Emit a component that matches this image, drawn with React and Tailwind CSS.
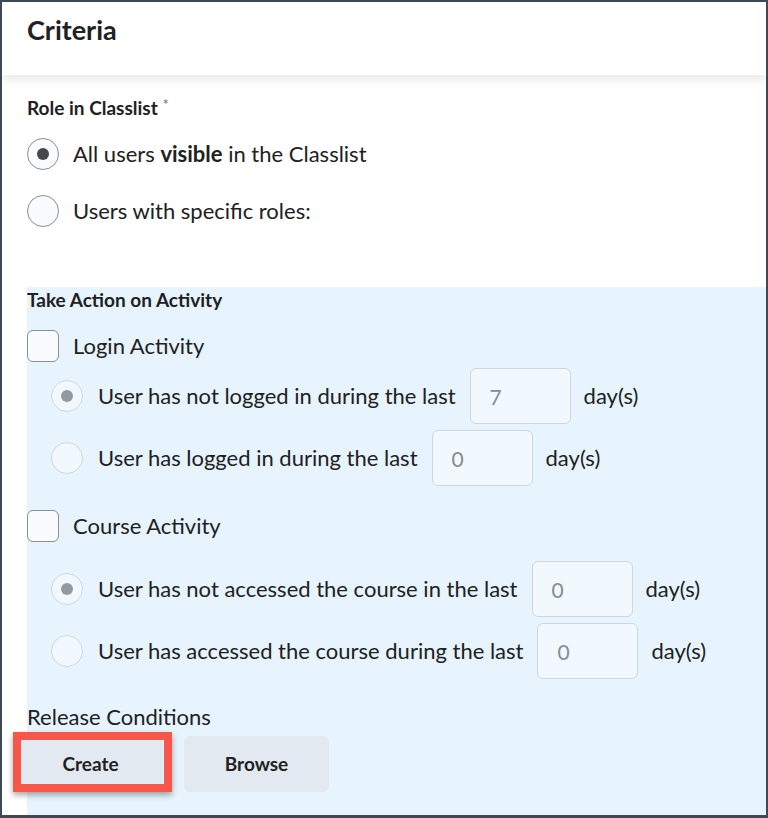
import { useState } from "react";

const Radio = ({ checked, disabled, onClick }) => (
  <button
    type="button"
    onClick={onClick}
    className={`w-[32px] h-[32px] shrink-0 rounded-full border flex items-center justify-center ${
      disabled
        ? "border-[#cfd6dc] bg-[#f1f8fe]"
        : "border-[#8a8f93] bg-[#f9fbff]"
    }`}
  >
    {checked && (
      <span
        className={`w-[12px] h-[12px] rounded-full ${
          disabled ? "bg-[#94999d]" : "bg-[#45494c]"
        }`}
      />
    )}
  </button>
);

const Checkbox = ({ checked, onClick }) => (
  <button
    type="button"
    onClick={onClick}
    className="w-[32px] h-[32px] shrink-0 rounded-[6px] border border-[#8a8f93] bg-[#f9fbff]"
  >
    {checked && <span className="text-[#202122]">✓</span>}
  </button>
);

const DayRow = ({ label, value, checked }) => (
  <div className="flex items-center h-[56px] pl-[24px]">
    <Radio checked={checked} disabled />
    <span className="ml-[15px] text-[22px] leading-[32px] text-[#202122]">
      {label}
    </span>
    <input
      type="text"
      defaultValue={value}
      className="ml-[14px] w-[101px] h-[56px] rounded-[6px] border border-[#cfd6dc] bg-[#f1f9fe] px-[19px] text-[21px] text-[#868c90] outline-none"
    />
    <span className="ml-[13px] text-[22px] leading-[32px] text-[#202122]">
      day(s)
    </span>
  </div>
);

export default function App() {
  const [role, setRole] = useState("all");
  const [login, setLogin] = useState(false);
  const [course, setCourse] = useState(false);

  return (
    <div
      className="w-[768px] h-[818px] border-2 border-b-[3px] border-[#3d4a55] bg-white flex flex-col overflow-hidden"
      style={{ fontFamily: "Lato, 'Noto Sans', sans-serif" }}
    >
      {/* Header */}
      <div className="relative z-10 h-[73px] shrink-0 bg-white px-[25px] pt-[12px] shadow-[0_4px_10px_rgba(0,0,0,0.10)]">
        <h1 className="text-[27px] font-bold text-[#202122] leading-[32px]">
          Criteria
        </h1>
      </div>

      {/* Role */}
      <div className="pl-[25px] pt-[21px] h-[212px] shrink-0">
        <div className="text-[19px] font-bold text-[#202122] leading-[24px]">
          Role in Classlist{" "}
          <span className="font-normal text-[#6e7376] relative -top-[5px] text-[15px]">
            *
          </span>
        </div>
        <div className="mt-[17px] flex flex-col gap-[25px]">
          <label className="flex items-center">
            <Radio checked={role === "all"} onClick={() => setRole("all")} />
            <span className="ml-[14px] text-[22px] leading-[32px] text-[#202122]">
              All users <b>visible</b> in the Classlist
            </span>
          </label>
          <label className="flex items-center">
            <Radio checked={role === "roles"} onClick={() => setRole("roles")} />
            <span className="ml-[14px] text-[22px] leading-[32px] text-[#202122]">
              Users with specific roles:
            </span>
          </label>
        </div>
      </div>

      {/* Activity */}
      <div className="flex-1 ml-[25px] bg-[#e7f4fe] pt-[1px]">
        <div className="text-[19px] font-bold text-[#202122] leading-[24px]">
          Take Action on Activity
        </div>
        <label className="mt-[18px] flex items-center">
          <Checkbox checked={login} onClick={() => setLogin(!login)} />
          <span className="ml-[14px] text-[22px] leading-[32px] text-[#202122]">
            Login Activity
          </span>
        </label>
        <div className="mt-[6px] flex flex-col gap-[6px]">
          <DayRow
            label="User has not logged in during the last"
            value="7"
            checked
          />
          <DayRow label="User has logged in during the last" value="0" />
        </div>
        <label className="mt-[24px] flex items-center">
          <Checkbox checked={course} onClick={() => setCourse(!course)} />
          <span className="ml-[14px] text-[22px] leading-[32px] text-[#202122]">
            Course Activity
          </span>
        </label>
        <div className="mt-[19px] flex flex-col gap-[6px]">
          <DayRow
            label="User has not accessed the course in the last"
            value="0"
            checked
          />
          <DayRow
            label="User has accessed the course during the last"
            value="0"
          />
        </div>

        <div className="mt-[26px] text-[22px] text-[#202122] leading-[24px]">
          Release Conditions
        </div>
        <div className="mt-[7px] flex gap-[21px]">
          <div className="relative -ml-[9px]">
            <button className="w-[145px] h-[56px] rounded-[6px] bg-[#e3e9f1] text-[19px] font-bold text-[#202122]">
              Create
            </button>
            <div className="absolute -left-[5px] -top-[4px] w-[159px] h-[60px] border-[8px] border-[#f6574a] shadow-[0_3px_6px_rgba(0,0,0,0.35)] pointer-events-none" />
          </div>
          <button className="w-[145px] h-[56px] rounded-[6px] bg-[#e3e9f1] text-[19px] font-bold text-[#202122]">
            Browse
          </button>
        </div>
      </div>
    </div>
  );
}
